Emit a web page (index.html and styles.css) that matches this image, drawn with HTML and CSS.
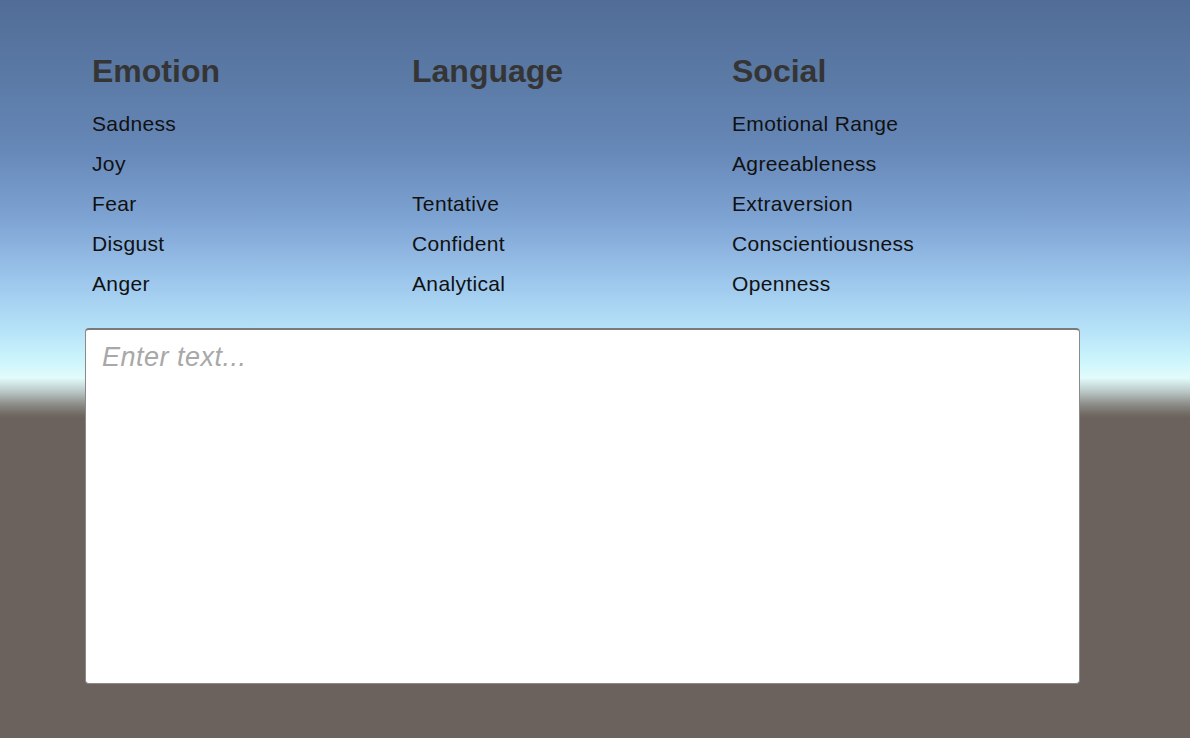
FILE: index.html
```html
<!DOCTYPE html>
<html lang="en">
<head>
    <meta charset="UTF-8">
    <title>Tone Analyzer</title>
    <link rel="stylesheet" href="styles.css">
</head>
<body>

<div class="scene">
    <div class="columns">
        <div class="column">
            <h2>Emotion</h2>
            <ul>
                <li>Sadness</li>
                <li>Joy</li>
                <li>Fear</li>
                <li>Disgust</li>
                <li>Anger</li>
            </ul>
        </div>
        <div class="column">
            <h2>Language</h2>
            <ul>
                <li></li>
                <li></li>
                <li>Tentative</li>
                <li>Confident</li>
                <li>Analytical</li>
            </ul>
        </div>
        <div class="column">
            <h2>Social</h2>
            <ul>
                <li>Emotional Range</li>
                <li>Agreeableness</li>
                <li>Extraversion</li>
                <li>Conscientiousness</li>
                <li>Openness</li>
            </ul>
        </div>
    </div>

    <textarea class="input-box" placeholder="Enter text..."></textarea>
</div>

</body>
</html>
```

FILE: styles.css
```css
html, body {
    margin: 0;
    height: 100%;
}
body {
    font-family: "Liberation Sans", Arial, sans-serif;
    background: linear-gradient(to bottom,
        #516d97 0px,
        #5b7aa6 80px,
        #6688b8 150px,
        #7ea4d4 220px,
        #9cc6ec 280px,
        #b6e2f8 330px,
        #cdf6fc 362px,
        #e2fbfb 378px,
        #b8c6c4 392px,
        #8e8e8a 404px,
        #726a65 414px,
        #6b625d 418px,
        #6b625d 100%);
}
.scene {
    padding: 52px 0 0 85px;
}
.columns {
    display: flex;
    padding-left: 7px;
}
.column {
    width: 320px;
}
.column h2 {
    margin: 0;
    font-size: 32px;
    line-height: 38px;
    font-weight: bold;
    color: #353535;
}
.column ul {
    list-style: none;
    margin: 0;
    padding: 22px 0 0 0;
}
.column li {
    height: 40px;
    line-height: 24px;
    font-size: 21px;
    color: #111;
    letter-spacing: 0.35px;
}
.input-box {
    display: block;
    box-sizing: border-box;
    width: 995px;
    height: 356px;
    margin-top: 16px;
    padding: 12px 16px 10px;
    border: 1px solid #8a8a8a;
    border-top: 2px solid #7a7a7a;
    border-radius: 4px;
    background: #fff;
    font-family: "Liberation Sans", Arial, sans-serif;
    font-size: 27px;
    font-style: italic;
    letter-spacing: 0.5px;
    color: #333;
    resize: none;
    outline: none;
}
.input-box::placeholder {
    color: #a8a8a8;
}
```
